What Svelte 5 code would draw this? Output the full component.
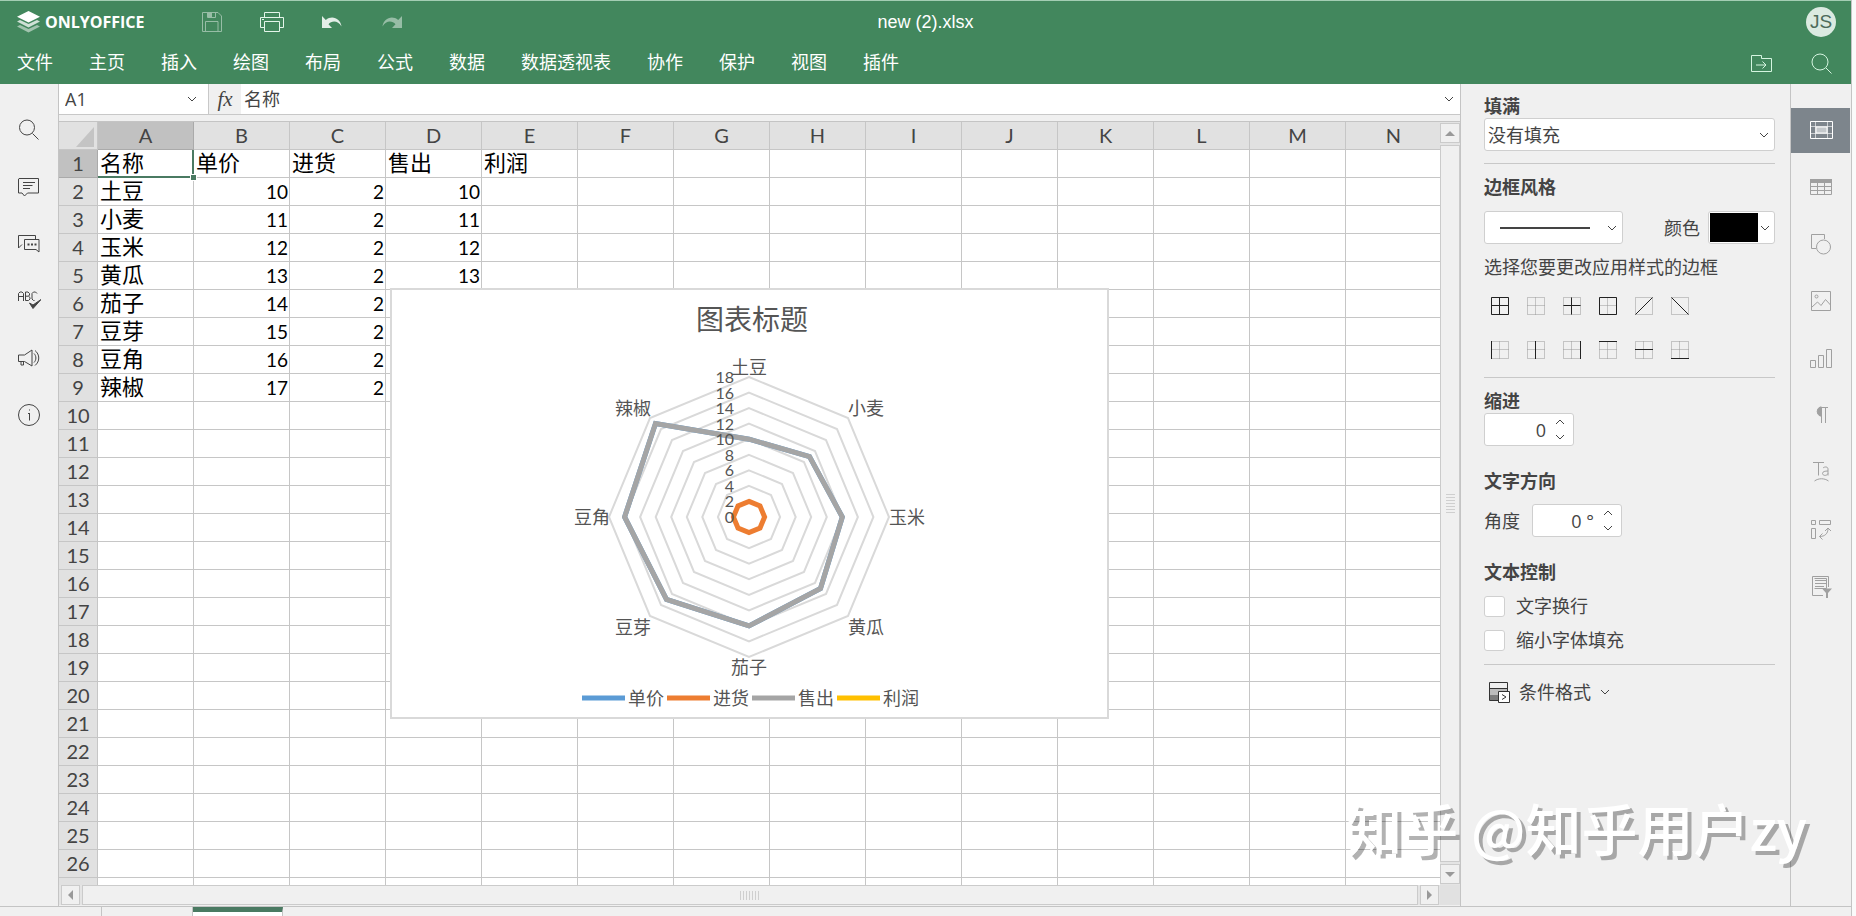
<script lang="ts">
  const menu = ['文件', '主页', '插入', '绘图', '布局', '公式', '数据', '数据透视表', '协作', '保护', '视图', '插件'];
  const columns = 'ABCDEFGHIJKLMN'.split('');
  const rowCount = 27;

  const data: (string | number)[][] = [
    ['名称', '单价', '进货', '售出', '利润'],
    ['土豆', 10, 2, 10],
    ['小麦', 11, 2, 11],
    ['玉米', 12, 2, 12],
    ['黄瓜', 13, 2, 13],
    ['茄子', 14, 2, 14],
    ['豆芽', 15, 2, 15],
    ['豆角', 16, 2, 16],
    ['辣椒', 17, 2, 17],
  ];
  const rows = Array.from({ length: rowCount }, (_, r) =>
    columns.map((_, c) => data[r]?.[c] ?? '')
  );

  // radar chart
  const cx = 357;
  const cy = 227;
  const radius = 140;
  const axisMax = 18;
  const ticks = [0, 2, 4, 6, 8, 10, 12, 14, 16, 18];

  function ring(values: number[]) {
    return values
      .map((v, i) => {
        const a = (Math.PI * 2 * i) / values.length;
        const r = (v / axisMax) * radius;
        return `${(cx + r * Math.sin(a)).toFixed(1)},${(cy - r * Math.cos(a)).toFixed(1)}`;
      })
      .join(' ');
  }

  const body = data.slice(1);
  const series = [
    { name: '单价', color: '#5b9bd5', values: body.map((r) => Number(r[1])) },
    { name: '进货', color: '#ed7d31', values: body.map((r) => Number(r[2])) },
    { name: '售出', color: '#a5a5a5', values: body.map((r) => Number(r[3])) },
    { name: '利润', color: '#ffc000', values: [] },
  ];
  const drawOrder = [series[0], series[2], series[1]];

  const labels = [
    { text: '土豆', x: 357, y: 84, anchor: 'middle' },
    { text: '小麦', x: 456, y: 125, anchor: 'start' },
    { text: '玉米', x: 497, y: 234, anchor: 'start' },
    { text: '黄瓜', x: 456, y: 344, anchor: 'start' },
    { text: '茄子', x: 357, y: 384, anchor: 'middle' },
    { text: '豆芽', x: 259, y: 344, anchor: 'end' },
    { text: '豆角', x: 218, y: 234, anchor: 'end' },
    { text: '辣椒', x: 259, y: 125, anchor: 'end' },
  ];

  // which solid line each border button paints
  const borders = [
    { title: '所有框线', d: 'M.5.5h17v17h-17zM8.500 .5v17M.5 8.500h17' },
    { title: '无框线', d: '' },
    { title: '内部框线', d: 'M8.500 .5v17M.5 8.500h17' },
    { title: '外部框线', d: 'M.5.5h17v17h-17z' },
    { title: '斜上框线', d: 'M.5 17.500l17-17' },
    { title: '斜下框线', d: 'M.5.5l17 17' },
    { title: '左框线', d: 'M.5 0v18' },
    { title: '内部竖框线', d: 'M8.500 0v18' },
    { title: '右框线', d: 'M17.500 0v18' },
    { title: '上框线', d: 'M0 .5h18' },
    { title: '内部横框线', d: 'M0 8.500h18' },
    { title: '下框线', d: 'M0 17.500h18' },
  ];

  const leftTools = ['查找', '批注', '聊天', '拼写检查', '反馈', '关于'];
  const rightTools = ['单元格', '表格', '形状', '图像', '图表', '段落', '艺术字', '数据透视', '切片器'];

  let fill = $state('没有填充');
  let indent = $state('0');
  let angle = $state('0 °');
  let wrap = $state(false);
  let shrink = $state(false);
</script>

{#snippet chevron(up = false)}
  <svg class="chevron" width="10" height="6" viewBox="0 0 10 6">
    <path d={up ? 'M1 5l4-4 4 4' : 'M1 1l4 4 4-4'} />
  </svg>
{/snippet}

<div class="app">
  <header>
    <div class="titlebar">
      <div class="title-left">
        <div class="brand">
          <svg width="23" height="22" viewBox="0 0 23 22">
            <path d="M0 15.500l3-1.400 8.500 4 8.500-4 3 1.400L11.500 21.500z" fill="#fff" opacity=".5" />
            <path d="M0 10.500l3-1.400 8.500 4 8.500-4 3 1.400L11.500 16.500z" fill="#fff" opacity=".75" />
            <path d="M11.500 0L23 5.700 11.500 11.500 0 5.700z" fill="#fff" />
          </svg>
          <span>ONLYOFFICE</span>
        </div>
        <button class="quick dim" aria-label="保存">
          <svg width="20" height="20" viewBox="0 0 20 20">
            <path d="M.5.5h15.500l3.500 3.500v15.500H.5zM3.500 19.500v-10h12.500v10M5.500.5v5h8v-5" fill="none" stroke="#fff" />
            <path d="M6 1h4v4H6z" fill="#fff" />
          </svg>
        </button>
        <button class="quick" aria-label="打印">
          <svg width="24" height="20" viewBox="0 0 24 20" fill="none" stroke="#e4f5ea">
            <path d="M4.500 5V.5h15V5M4.500 15.500h-4V5.500h23v10h-4M4.500 9.500h15v10h-15zM2 7.500h2" />
          </svg>
        </button>
        <button class="quick" aria-label="撤消">
          <svg width="20" height="12" viewBox="0 0 20 12">
            <path d="M0 0v12h10L6.500 8.200C9.500 4.500 16 4 19.500 10.500 18.500 3 10.500-1.500 3.800 4z" fill="#fff" opacity=".85" />
          </svg>
        </button>
        <button class="quick dim" aria-label="重做">
          <svg width="20" height="12" viewBox="0 0 20 12">
            <path d="M20 0v12H10l3.500-3.800C10.500 4.500 4 4 .5 10.500 1.500 3 9.500-1.500 16.200 4z" fill="#fff" />
          </svg>
        </button>
      </div>
      <h1>new (2).xlsx</h1>
      <div class="user"><span class="avatar">JS</span></div>
    </div>
    <div class="menubar">
      <nav>
        {#each menu as item}
          <button>{item}</button>
        {/each}
      </nav>
      <button class="quick" aria-label="打开文件所在位置">
        <svg width="21" height="17" viewBox="0 0 21 17" fill="none" stroke="#d5f5e0">
          <path d="M.5.5h10v3h10v13H.5zM5 10h10M11.500 6.500L15 10l-3.500 3.500" />
        </svg>
      </button>
      <button class="quick" aria-label="搜索">
        <svg width="21" height="21" viewBox="0 0 21 21" fill="none" stroke="#d5f5e0">
          <circle cx="9" cy="9" r="8" />
          <path d="M15 15l5.500 5.500" />
        </svg>
      </button>
    </div>
  </header>

  <main>
    <aside class="left-tools">
      {#each leftTools as tool, i}
        <button aria-label={tool}>
          <svg width="24" height="24" viewBox="0 0 24 24" fill="none" stroke="#444">
            {#if i === 0}
              <circle cx="10" cy="9.500" r="7.500" />
              <path d="M15.500 15.500l6 6" />
            {:else if i === 1}
              <path d="M2 3.500h19.500v14.500h-11L7.500 21l-2.500-3H1.500v-14zM6 7.500h12M6 10.500h9.500M6 13.500h7" />
            {:else if i === 2}
              <path d="M18.500 7V3.500H1.500V16L5 12.500M7.500 7.500h14.500V20l-3-2.500H7.500z" />
              <path d="M10.500 12.500h2M14 12.500h2M17.500 12.500h2" stroke-width="2" />
            {:else if i === 3}
              <path d="M1.500 12V4.500L3 3h2l1.500 1.500V12M1.500 7.500h5M8.500 3v8.500h3L13 10V8.500l-1.500-1.300L12.500 6V4.500L11 3zM8.500 7.200h3M20 4.500L18.500 3h-2L15 4.500V10l1.500 1.500h1" />
              <path d="M12.500 14l3.500 5.500 8-9-8 5.500z" fill="#444" />
            {:else if i === 4}
              <path d="M1.500 9v6.500h6l7.500 4.500V4L7.500 9zM4 15.500V19h2.500v-3.500" />
              <path d="M17 7.500c2.500 2.500 2.500 6.500 0 9M18 4.500c5 4 5 11 0 15" />
            {:else}
              <circle cx="12" cy="12" r="10.500" />
              <path d="M12.500 10v7.500M11 10.500h1.500M12 7h1" />
            {/if}
          </svg>
        </button>
      {/each}
    </aside>

    <section class="editor">
      <div class="formula-bar">
        <label class="name-box">
          <input value="A1" aria-label="名称框" />
          {@render chevron()}
        </label>
        <button class="fx">fx</button>
        <input class="formula" value="名称" aria-label="编辑栏" />
        <button class="expand" aria-label="展开">{@render chevron()}</button>
      </div>

      <div class="workspace">
        <div class="sheet">
          <table>
            <thead>
              <tr>
                <th class="corner"><svg width="18" height="20" viewBox="0 0 18 20"><path d="M18 0v20H0z" fill="#c4c4c4" /></svg></th>
                {#each columns as col, c}
                  <th class:selected={c === 0}>{col}</th>
                {/each}
              </tr>
            </thead>
            <tbody>
              {#each rows as row, r}
                <tr>
                  <th class:selected={r === 0}>{r + 1}</th>
                  {#each row as value, c}
                    <td class:num={typeof value === 'number'} class:active={r === 0 && c === 0}>{value}</td>
                  {/each}
                </tr>
              {/each}
            </tbody>
          </table>

          <figure class="chart">
            <svg width="715" height="427" viewBox="0 0 715 427">
              <g fill="none" stroke="#d9d9d9" stroke-width="2">
                {#each ticks.slice(1) as t}
                  <polygon points={ring(Array(8).fill(t))} />
                {/each}
              </g>
              <g fill="none" stroke-width="5">
                {#each drawOrder as s}
                  <polygon points={ring(s.values)} stroke={s.color} />
                {/each}
              </g>
              <text class="chart-title" x="360" y="40" text-anchor="middle">图表标题</text>
              {#each ticks as t}
                <text class="tick" x="342" y={cy + 6 - (t / axisMax) * radius} text-anchor="end">{t}</text>
              {/each}
              {#each labels as l}
                <text class="label" x={l.x} y={l.y} text-anchor={l.anchor}>{l.text}</text>
              {/each}
              {#each series as s, i}
                <path d="M{190 + i * 85} 408h43" stroke={s.color} stroke-width="5" />
                <text class="label" x={236 + i * 85} y="415">{s.name}</text>
              {/each}
            </svg>
          </figure>
        </div>

        <div class="vscroll">
          <button aria-label="向上滚动"><svg width="10" height="5"><path d="M5 0l5 5H0z" fill="#999" /></svg></button>
          <div class="thumb"><svg width="9" height="20"><path d="M0 .5h9M0 3.500h9M0 6.500h9M0 9.500h9M0 12.500h9M0 15.500h9M0 18.500h9" stroke="#cfcfcf" /></svg></div>
          <button aria-label="向下滚动"><svg width="10" height="5"><path d="M0 0h10L5 5z" fill="#999" /></svg></button>
        </div>
        <div class="hscroll">
          <button aria-label="向左滚动"><svg width="5" height="10"><path d="M5 0v10L0 5z" fill="#999" /></svg></button>
          <div class="thumb"><svg width="20" height="9"><path d="M.5 0v9M3.500 0v9M6.500 0v9M9.500 0v9M12.500 0v9M15.500 0v9M18.500 0v9" stroke="#cfcfcf" /></svg></div>
          <button aria-label="向右滚动"><svg width="5" height="10"><path d="M0 0l5 5-5 5z" fill="#999" /></svg></button>
        </div>
        <div class="scroll-corner"></div>
      </div>
    </section>

    <aside class="panel">
      <label class="heading" for="fill">填满</label>
      <div class="select-wrap">
        <select id="fill" bind:value={fill}>
          <option>没有填充</option>
        </select>
        {@render chevron()}
      </div>
      <hr />

      <h2>边框风格</h2>
      <div class="style-row">
        <button class="box line-style" aria-label="线条样式">
          <span class="line"></span>
          {@render chevron()}
        </button>
        <span class="color-label">颜色</span>
        <button class="box color" aria-label="颜色">
          <span class="swatch"></span>
          {@render chevron()}
        </button>
      </div>
      <p>选择您要更改应用样式的边框</p>
      <div class="borders">
        {#each borders as b}
          <button aria-label={b.title}>
            <svg width="18" height="18" viewBox="0 0 18 18" fill="none">
              {#if b.title.startsWith('斜')}
                <path class="dots" d="M.5.5h17v17h-17z" />
              {:else}
                <path class="dots" d="M.5.5h17v17h-17zM8.500.5v17M.5 8.500h17" />
              {/if}
              <path d={b.d} stroke="#222" />
            </svg>
          </button>
        {/each}
      </div>
      <hr />

      <label class="heading" for="indent">缩进</label>
      <div class="box spin">
        <input id="indent" bind:value={indent} />
        <div class="steps">
          <button aria-label="增加">{@render chevron(true)}</button>
          <button aria-label="减少">{@render chevron()}</button>
        </div>
      </div>

      <h2 class="spaced">文字方向</h2>
      <div class="angle-row">
        <label for="angle">角度</label>
        <div class="box spin">
          <input id="angle" bind:value={angle} />
          <div class="steps">
            <button aria-label="增加">{@render chevron(true)}</button>
            <button aria-label="减少">{@render chevron()}</button>
          </div>
        </div>
      </div>

      <h2 class="spaced">文本控制</h2>
      <label class="check"><input type="checkbox" bind:checked={wrap} />文字换行</label>
      <label class="check"><input type="checkbox" bind:checked={shrink} />缩小字体填充</label>
      <hr />

      <button class="cond">
        <svg width="21" height="21" viewBox="0 0 21 21" fill="none" stroke="#333">
          <path d="M1 7h17v6H1z" fill="#bdbdbd" stroke="none" />
          <path d="M1 13h8v5H1z" fill="#7d7d7d" stroke="none" />
          <path d="M.5.5h18v18H.5zM.5 6.500h18" />
          <path d="M9.500 9.500h11v11h-11z" fill="#fff" />
          <path d="M13 12.500l4 2.500-4 2.500" />
        </svg>
        条件格式
        {@render chevron()}
      </button>
    </aside>

    <aside class="right-tools">
      {#each rightTools as tool, i}
        <button class:on={i === 0} aria-label={tool}>
          <svg width="24" height="24" viewBox="0 0 24 24" fill="none" stroke={i === 0 ? '#fff' : '#a0a0a0'}>
            {#if i === 0}
              <path d="M6.500 3.500v17M18.500 3.500v17M1.500 8.500h22M1.500 15.500h22" opacity=".6" />
              <path d="M7 9h11v6H7z" fill="#c4c8cb" />
              <path d="M1.500 3.500h22v17h-22z" />
            {:else if i === 1}
              <path d="M1.500 7.500h21v12h-21zM1.500 11.500h21M1.500 15.500h21M8.500 7v12.500M15.500 7v12.500" />
              <path d="M1 4h22v4H1z" fill="#a0a0a0" stroke="none" />
            {:else if i === 2}
              <path d="M7 16.500H2.500v-14h13V7" />
              <circle cx="14.500" cy="15" r="7" />
            {:else if i === 3}
              <path d="M2.500 2.500h19v19h-19zM3 18l5.500-5 3.500 3.500 4.500-6 5 5.500" />
              <circle cx="7.500" cy="7.500" r="1.500" />
            {:else if i === 4}
              <path d="M1.500 14.500h5v7h-5zM9.500 9.500h5v12h-5zM17.500 3.500h5v18h-5z" />
            {:else if i === 5}
              <path d="M12.500 4v16M16.500 4v16M12 4.500h7" />
              <path d="M12.500 4H11a5 5 0 000 9h1.500z" fill="#a0a0a0" />
            {:else if i === 6}
              <path d="M4 2.500h11M9.500 2.500v13M14 8c1.500-1.500 5-1.500 5 1v6.500M19 11c-3 0-5.500.5-5.500 2.500s4 3 5.500 0M5.500 21c4-3 10-3 14 0" />
            {:else if i === 7}
              <path d="M2.500 3.500h4v4h-4zM10.500 3.500h11v4h-11zM2.500 11.500h4v10h-4zM10.500 19.500c5.500 0 8.500-3 8.500-8M13.500 16.500l-3 3 3 3M16 14l3-3 3 3" />
            {:else}
              <path d="M14 21.500H3.500v-19h16V13M6 6.500h11M6 9.500h11M6 12.500h9M5.500 4.500h12v10h-12" />
              <path d="M13 14.500h10l-4 4.500v5h-2v-5z" fill="#a0a0a0" stroke="none" />
            {/if}
          </svg>
        </button>
      {/each}
    </aside>
  </main>

  <footer>
    <div class="sheet-nav"></div>
    <div class="tab-gap"></div>
    <div class="tab"></div>
  </footer>

  <div class="watermark">知乎 @知乎用户zy</div>
</div>

<style>
  :global(body) {
    margin: 0;
    background: #fafafa;
  }

  .app {
    position: relative;
    display: flex;
    flex-direction: column;
    height: 100vh;
    margin-right: 4px;
    box-sizing: border-box;
    border-right: 1px solid #c4c4c4;
    overflow: hidden;
    background: #f0f0f0;
    color: #444;
    font-family: 'Open Sans', 'Noto Sans CJK SC', sans-serif;
    font-size: 18px;
    line-height: 24px;
  }

  button,
  input,
  select {
    margin: 0;
    padding: 0;
    border: 0;
    background: none;
    color: inherit;
    font: inherit;
    outline: none;
    box-sizing: border-box;
  }

  button {
    display: flex;
    align-items: center;
    justify-content: center;
    cursor: pointer;
  }

  .chevron {
    flex: none;
    fill: none;
    stroke: #444;
  }

  /* header */
  header {
    flex: none;
    border-top: 1px solid #a3cdb3;
    background: #42875d;
    color: #fff;
  }

  .titlebar {
    display: grid;
    grid-template-columns: 1fr auto 1fr;
    align-items: center;
    height: 42px;
  }

  .title-left {
    display: flex;
    align-items: center;
  }

  .brand {
    display: flex;
    align-items: center;
    gap: 5px;
    width: 165px;
    padding-left: 17px;
    font-size: 16px;
    font-weight: 700;
  }

  .quick {
    width: 60px;
    height: 40px;
  }

  .dim {
    opacity: 0.45;
  }

  h1 {
    margin: 0;
    font: 18px/24px 'Liberation Sans', sans-serif;
  }

  .user {
    display: flex;
    justify-content: flex-end;
    padding-right: 15px;
  }

  .avatar {
    width: 30px;
    border-radius: 50%;
    background: #dbeae1;
    color: #4c6b5a;
    font: 19px/30px 'Liberation Sans', sans-serif;
    text-align: center;
  }

  .menubar {
    display: flex;
    align-items: center;
    height: 41px;
  }

  nav {
    display: flex;
    flex: 1;
    gap: 36px;
    padding: 0 0 3px 17px;
  }

  /* body */
  main {
    display: grid;
    grid-template-columns: 58px minmax(0, 1fr) 329px 61px;
    flex: 1;
    min-height: 0;
  }

  .left-tools,
  .right-tools {
    display: flex;
    flex-direction: column;
    gap: 12px;
    padding-top: 24px;
  }

  .left-tools button,
  .right-tools button {
    height: 45px;
    padding-bottom: 2px;
  }

  .right-tools {
    padding-right: 1px;
    border-left: 1px solid #c4c4c4;
  }

  .right-tools .on {
    background: #7d858c;
  }

  .editor {
    display: flex;
    flex-direction: column;
    min-height: 0;
    border: solid #c4c4c4;
    border-width: 0 1px;
  }

  .formula-bar {
    display: flex;
    height: 30px;
    border-bottom: 1px solid #c8c8c8;
    background: #fff;
  }

  .name-box {
    display: flex;
    align-items: center;
    width: 150px;
    box-sizing: border-box;
    padding: 0 11px 0 6px;
    border-right: 1px solid #c8c8c8;
  }

  .name-box input,
  .formula {
    flex: 1;
    min-width: 0;
  }

  .fx {
    width: 32px;
    background: #f0f0f0;
    font: italic 21px/24px 'Liberation Serif', serif;
  }

  .formula {
    padding-left: 3px;
  }

  .expand {
    width: 22px;
  }

  .workspace {
    display: grid;
    grid-template-columns: minmax(0, 1fr) 20px;
    grid-template-rows: minmax(0, 1fr) 20px;
    flex: 1;
    min-height: 0;
    margin: 6px 0 1px;
    border-top: 1px solid #c4c4c4;
  }

  .sheet {
    position: relative;
    overflow: hidden;
    background: #fff;
  }

  table {
    width: 1383px;
    table-layout: fixed;
    border-collapse: separate;
    border-spacing: 0;
    color: #000;
    font-family: Lato, 'Noto Sans CJK SC', sans-serif;
    font-size: 22px;
    line-height: 25px;
  }

  th,
  td {
    box-sizing: border-box;
    width: 96px;
    height: 28px;
    padding: 0 2px 2px;
    border: solid #c6c6c6;
    border-width: 0 1px 1px 0;
    overflow: hidden;
    white-space: nowrap;
  }

  th {
    padding: 0;
    background: #e1e1e1;
    color: #444;
    font-size: 20px;
    font-weight: 400;
  }

  th:first-child {
    width: 39px;
  }

  .corner svg {
    display: block;
    margin: 2px 3px 0 auto;
  }

  th.selected {
    background: #c1c1c1;
    border-color: #aaa;
  }

  .num {
    padding: 0 1px 0 0;
    font-size: 19px;
    text-align: right;
  }

  .active {
    position: relative;
    overflow: visible;
    box-shadow: inset -1px -1px #4a7a62;
    border-color: #4a7a62;
  }

  .active::after {
    content: '';
    position: absolute;
    right: -3px;
    bottom: -3px;
    width: 5px;
    height: 5px;
    background: #4a7a62;
    outline: 1px solid #fff;
  }

  .chart {
    position: absolute;
    left: 331px;
    top: 166px;
    margin: 0;
    border: 2px solid #d9d9d9;
    background: #fff;
  }

  .chart svg {
    display: block;
  }

  .chart text {
    fill: #555;
    font-family: Lato, 'Noto Sans CJK SC', sans-serif;
  }

  .chart .chart-title {
    font-size: 28px;
  }

  .chart .label {
    font-size: 18px;
  }

  .chart .tick {
    font-size: 16px;
  }

  .vscroll,
  .hscroll {
    display: flex;
    gap: 2px;
    background: #e4e4e4;
  }

  .vscroll {
    flex-direction: column;
    padding: 1px 0;
  }

  .hscroll {
    padding: 0 1px 0 2px;
  }

  .vscroll button,
  .hscroll button,
  .thumb {
    flex: none;
    border: 1px solid #cbcbcb;
    background: #f0f0f0;
  }

  .vscroll button {
    height: 20px;
  }

  .hscroll button {
    width: 19px;
  }

  .vscroll .thumb,
  .hscroll .thumb {
    display: flex;
    flex: 1;
    align-items: center;
    justify-content: center;
  }

  .scroll-corner {
    background: #e1e1e1;
  }

  /* cell settings */
  .panel {
    padding: 10px 15px 0 23px;
  }

  .heading,
  h2 {
    display: block;
    margin: 0;
    font-size: 18px;
    font-weight: 700;
    line-height: 24px;
  }

  .panel p {
    margin: 11px 0 0;
  }

  hr {
    margin: 12px 0 11px;
    border: 0;
    border-top: 1px solid #c8c8c8;
  }

  .select-wrap {
    position: relative;
  }

  .select-wrap .chevron {
    position: absolute;
    right: 6px;
    top: 14px;
    pointer-events: none;
  }

  select,
  .box {
    height: 33px;
    border: 1px solid #cfcfcf;
    border-radius: 3px;
    background: #fff;
    box-sizing: border-box;
  }

  select {
    display: block;
    width: 100%;
    padding: 0 3px;
    appearance: none;
  }

  .style-row {
    display: flex;
    align-items: center;
    margin-top: 12px;
  }

  .line-style {
    width: 139px;
    justify-content: space-between;
    padding: 0 5px 0 15px;
  }

  .line {
    width: 90px;
    height: 2px;
    background: #444;
  }

  .color-label {
    margin: 0 8px 0 auto;
  }

  .color {
    width: 67px;
    justify-content: space-between;
    padding: 0 4px 0 1px;
  }

  .swatch {
    width: 48px;
    height: 29px;
    background: #000;
  }

  .borders {
    display: grid;
    grid-template-columns: repeat(6, 18px);
    gap: 26px 18px;
    margin: 18px 0 18px 7px;
  }

  .dots {
    stroke: #999;
    stroke-dasharray: 1 1;
  }

  .spin {
    display: flex;
    width: 90px;
  }

  .spin input {
    flex: 1;
    min-width: 0;
    text-align: right;
  }

  .steps {
    display: flex;
    flex-direction: column;
    justify-content: space-evenly;
    width: 27px;
  }

  .steps button {
    height: 15px;
  }

  .spaced {
    margin-top: 23px;
  }

  .angle-row {
    display: flex;
    align-items: center;
    gap: 12px;
    margin-top: 11px;
  }

  .check {
    display: flex;
    align-items: center;
    gap: 11px;
    height: 34px;
  }

  .spaced + .check {
    margin-top: 5px;
  }

  .check input {
    width: 21px;
    height: 21px;
    border: 1px solid #d0d0d0;
    border-radius: 3px;
    background: #fff;
    appearance: none;
  }

  .check input:checked {
    background: #42875d;
  }

  .check + hr {
    margin: 7px 0 15px;
  }

  .cond {
    gap: 9px;
    padding-left: 5px;
  }

  /* sheet tabs */
  footer {
    display: flex;
    flex: none;
    height: 9px;
    border-top: 1px solid #c4c4c4;
  }

  .sheet-nav {
    width: 101px;
    border-right: 1px solid #c4c4c4;
  }

  .tab-gap {
    width: 90px;
    border-right: 1px solid #c4c4c4;
  }

  .tab {
    width: 90px;
    box-sizing: border-box;
    border-top: 5px solid #4a7a62;
    border-right: 1px solid #c4c4c4;
    background: #fff;
  }

  .watermark {
    position: absolute;
    right: 44px;
    bottom: 61px;
    color: #fff;
    font: 500 56px/56px 'Noto Sans CJK SC', sans-serif;
    text-shadow: 4px 4px rgba(0, 0, 0, 0.3);
    white-space: nowrap;
    pointer-events: none;
  }
</style>
